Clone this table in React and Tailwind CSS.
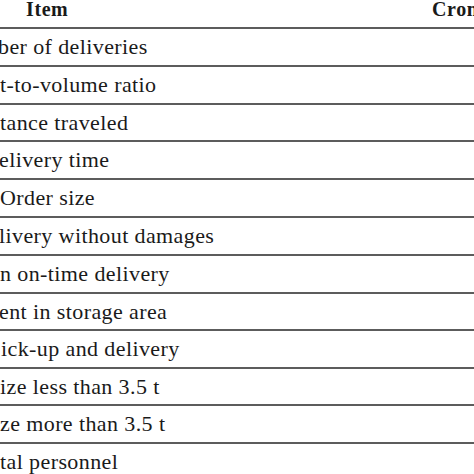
export default function App() {
  const rows = [
    { t: "ber of deliveries", h: "h-[38px]", ml: "ml-[-2px]" },
    { t: "t-to-volume ratio", h: "h-[38px]", ml: "ml-[0px]" },
    { t: "tance traveled", h: "h-[37px]", ml: "ml-[0px]" },
    { t: "elivery time", h: "h-[38px]", ml: "ml-[-1px]" },
    { t: "Order size", h: "h-[38px]", ml: "ml-[0px]" },
    { t: "livery without damages", h: "h-[38px]", ml: "ml-[-1px]" },
    { t: "n on-time delivery", h: "h-[38px]", ml: "ml-[0px]" },
    { t: "ent in storage area", h: "h-[37px]", ml: "ml-[-1px]" },
    { t: "ick-up and delivery", h: "h-[38px]", ml: "ml-[1px]" },
    { t: "ize less than 3.5 t", h: "h-[37px]", ml: "ml-[0px]" },
    { t: "ze more than 3.5 t", h: "h-[38px]", ml: "ml-[0px]" },
    { t: "tal personnel", h: "h-[38px]", ml: "ml-[0px]" },
  ];
  return (
    <div
      className="w-[474px] h-[474px] overflow-hidden bg-white text-[#1a1a1a]"
      style={{ fontFamily: '"Liberation Serif", "DejaVu Serif", serif' }}
    >
      <div className="h-[27px] flex font-bold text-[20px] leading-[22px] tracking-[0.6px] whitespace-nowrap">
        <span className="w-[432px] shrink-0 pl-[26px] mt-[-2px]">Item</span>
        <span className="shrink-0 mt-[-2px]">Crom</span>
      </div>
      {rows.map((r, i) => (
        <div
          key={i}
          className={`${r.h} border-t-2 border-[#5c5c5c] overflow-hidden`}
        >
          <div className={`${r.ml} pt-[6px] text-[22px] leading-[24px] tracking-[0.4px] whitespace-nowrap`}>
            {r.t}
          </div>
        </div>
      ))}
      <div className="border-t-2 border-[#5c5c5c]"></div>
    </div>
  );
}
